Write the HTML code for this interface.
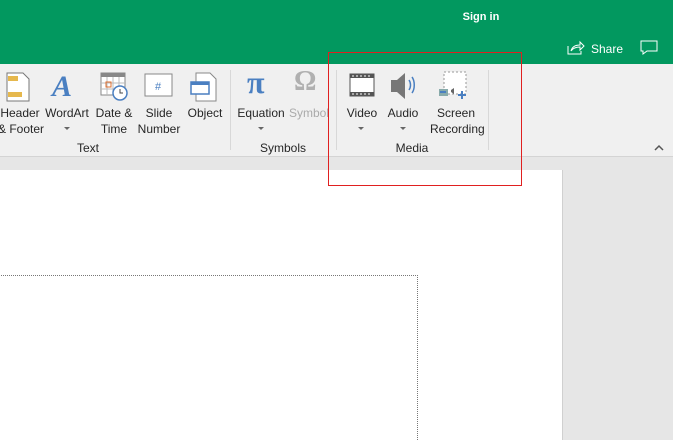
<!DOCTYPE html>
<html style="width:673px;height:440px;overflow:hidden"><head><style>
body{margin:0;width:673px;height:440px;overflow:hidden;position:relative;font-family:"Liberation Sans",sans-serif;background:#e6e6e6}
.a{position:absolute}
.t{position:absolute;font-size:12px;color:#262626;text-align:center;line-height:16px;white-space:nowrap}
.arr{position:absolute;width:0;height:0;border-left:3px solid transparent;border-right:3px solid transparent;border-top:3px solid #666}
</style></head><body>
<div class="a" style="left:0;top:0;width:673px;height:64px;background:#02985f"></div>
<div class="t" style="left:446px;top:9px;width:70px;color:#fff;font-weight:bold;font-size:11px">Sign in</div>
<svg class="a" style="left:566px;top:40px" width="20" height="16"><path d="M2 6v8h13v-3" fill="none" stroke="#fff"/><path d="M5 11c1-4 4-6 9-6V2l4 4-4 4V7c-4 0-7 1-9 4z" fill="none" stroke="#fff"/></svg>
<div class="t" style="left:591px;top:41px;color:#fff;font-size:12px">Share</div>
<svg class="a" style="left:640px;top:40px" width="20" height="16"><path d="M1 1h16v10H7l-4 3v-3H1z" fill="none" stroke="#fff"/></svg>
<div class="a" style="left:0;top:64px;width:673px;height:92px;background:#f0f0f0;border-bottom:1px solid #d4d4d4"></div>
<svg class="a" style="left:6px;top:72px" width="24" height="30"><path d="M1 1h16l6 6v22H1z" fill="#fff" stroke="#777"/><rect x="2" y="4" width="10" height="5" fill="#e6b84d"/><rect x="2" y="20" width="14" height="5" fill="#e6b84d"/></svg>
<div class="a" style="left:52px;top:70px;font:italic bold 30px 'Liberation Serif',serif;color:#4a7fc1">A</div>
<svg class="a" style="left:100px;top:72px" width="30" height="30"><rect x="1" y="1" width="24" height="22" fill="#fff" stroke="#888"/><rect x="1" y="1" width="24" height="4" fill="#888"/><path d="M1 11h24M1 17h24M7 5v18M13 5v18M19 5v18" stroke="#bbb"/><rect x="6" y="10" width="5" height="5" fill="none" stroke="#e07030"/><circle cx="20" cy="21" r="7" fill="#fff" stroke="#4a7fc1" stroke-width="1.5"/><path d="M20 17v4h3" stroke="#444" fill="none"/></svg>
<svg class="a" style="left:144px;top:73px" width="30" height="26"><rect x="1" y="1" width="27" height="22" fill="#fff" stroke="#888"/><text x="14" y="17" font-size="11" fill="#4a7fc1" text-anchor="middle" font-family="Liberation Sans">#</text></svg>
<svg class="a" style="left:190px;top:72px" width="30" height="30"><path d="M6 1h14l6 6v22H6z" fill="#fff" stroke="#888"/><rect x="1" y="10" width="18" height="12" fill="#fff" stroke="#4a7fc1" stroke-width="1.5"/><rect x="1" y="10" width="18" height="3" fill="#4a7fc1"/></svg>
<div class="a" style="left:247px;top:64px;font:bold 32px 'Liberation Serif',serif;color:#4a7fc1">π</div>
<div class="a" style="left:294px;top:66px;font:bold 28px 'Liberation Serif',serif;color:#b0b0b0">Ω</div>
<svg class="a" style="left:349px;top:73px" width="26" height="24"><rect x="1" y="1" width="24" height="22" fill="#fff" stroke="#555"/><rect x="1" y="1" width="24" height="4" fill="#555"/><rect x="1" y="19" width="24" height="4" fill="#555"/><path d="M3 3h2M7 3h2M11 3h2M15 3h2M19 3h2M3 21h2M7 21h2M11 21h2M15 21h2M19 21h2" stroke="#fff"/></svg>
<svg class="a" style="left:390px;top:71px" width="30" height="30"><path d="M1 9h6l8-7v26l-8-7H1z" fill="#777"/><path d="M19 9c2 3 2 7 0 10M22 6c3 4 3 12 0 16" fill="none" stroke="#4a7fc1" stroke-width="1.5"/></svg>
<svg class="a" style="left:438px;top:71px" width="32" height="32"><rect x="6" y="1" width="22" height="22" fill="#fff" stroke="#999" stroke-dasharray="2,2"/><rect x="1" y="18" width="9" height="7" fill="#8aa"/><rect x="2" y="20" width="6" height="2" fill="#4a7fc1"/><path d="M13 19l3-2v6l-3-2z" fill="#666"/><path d="M20 24h8M24 20v8" stroke="#4a7fc1" stroke-width="2"/></svg>
<div class="t" style="left:-2px;top:105px;width:44px">Header<br>&amp; Footer</div>
<div class="t" style="left:44px;top:105px;width:46px">WordArt</div><div class="arr" style="left:64px;top:127px"></div>
<div class="t" style="left:93px;top:105px;width:42px">Date &amp;<br>Time</div>
<div class="t" style="left:136px;top:105px;width:46px">Slide<br>Number</div>
<div class="t" style="left:184px;top:105px;width:42px">Object</div>
<div class="t" style="left:236px;top:105px;width:50px">Equation</div><div class="arr" style="left:258px;top:127px"></div>
<div class="t" style="left:288px;top:105px;width:42px;color:#aaa">Symbol</div>
<div class="t" style="left:345px;top:105px;width:34px">Video</div><div class="arr" style="left:358px;top:127px"></div>
<div class="t" style="left:386px;top:105px;width:34px">Audio</div><div class="arr" style="left:400px;top:127px"></div>
<div class="t" style="left:430px;top:105px;width:52px">Screen<br>Recording</div>
<div class="t" style="left:68px;top:140px;width:40px">Text</div>
<div class="t" style="left:258px;top:140px;width:50px">Symbols</div>
<div class="t" style="left:390px;top:140px;width:44px">Media</div>
<div class="a" style="left:230px;top:70px;width:1px;height:80px;background:#d8d8d8"></div>
<div class="a" style="left:336px;top:70px;width:1px;height:80px;background:#d8d8d8"></div>
<div class="a" style="left:488px;top:70px;width:1px;height:80px;background:#d8d8d8"></div>
<svg class="a" style="left:654px;top:144px" width="10" height="8"><path d="M1 6l4-4 4 4" fill="none" stroke="#555" stroke-width="1.5"/></svg>
<div class="a" style="left:0;top:170px;width:562px;height:270px;background:#fff;border-right:1px solid #d0d0d0"></div>
<div class="a" style="left:-2px;top:275px;width:419px;height:164px;border-top:1px dotted #777;border-right:1px dotted #777"></div>
<div class="a" style="left:328px;top:52px;width:192px;height:132px;border:1px solid #e02020"></div>
</body></html>
